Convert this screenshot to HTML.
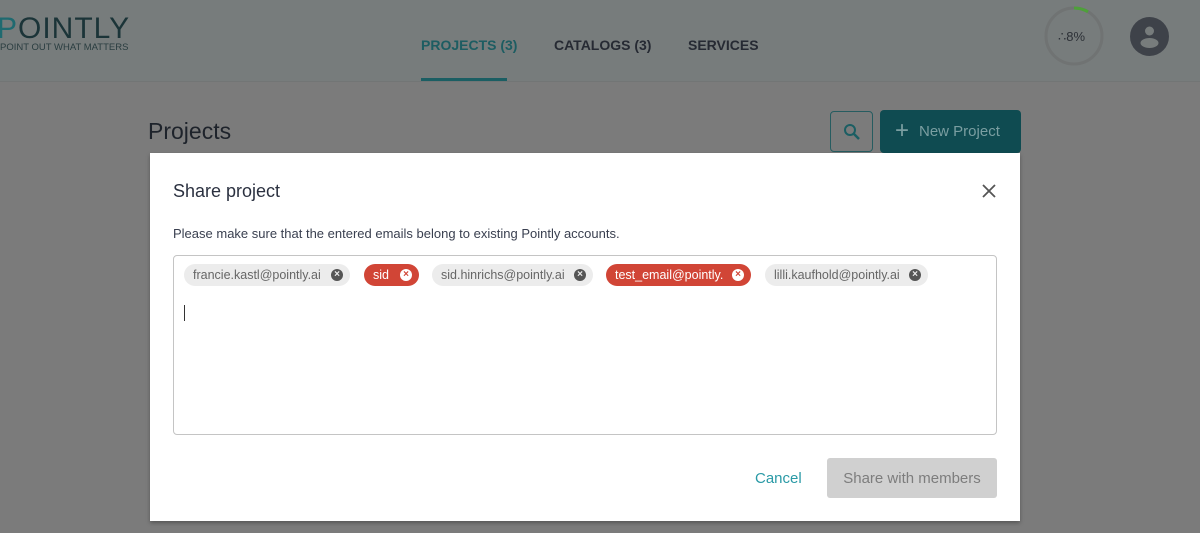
<!DOCTYPE html>
<html><head><style>
*{margin:0;padding:0;box-sizing:border-box}
body{width:1200px;height:533px;overflow:hidden;background:#7b7b7b;font-family:"Liberation Sans",sans-serif;position:relative}
.hdr{position:absolute;left:0;top:0;width:1200px;height:82px;background:#777c7c;border-bottom:1px solid #727575}
.abs{position:absolute}
.chip{position:absolute;top:264px;height:22px;border-radius:11px;background:#ececec;color:#666;font-size:12.5px;line-height:22px;padding-left:9px}
.chip.red{background:#d14536;color:#fff}
.x{position:absolute;right:7px;top:5px;width:12px;height:12px;border-radius:6px;background:#555;color:#ececec;font-size:10px;line-height:12px;text-align:center;font-weight:bold}
.red .x{background:#fff;color:#d14536}
</style></head><body>
<div class="hdr">
 <div class="abs" style="left:-3px;top:12px;font-size:30px;letter-spacing:1px;color:#1b3438"><span style="color:#1f6a70">P</span>OINTLY</div>
 <div class="abs" style="left:0;top:42px;font-size:9.5px;color:#2a3d40">POINT OUT WHAT MATTERS</div>
 <div class="abs" style="left:421px;top:37px;font-size:14px;font-weight:bold;color:#1d5d62">PROJECTS (3)</div>
 <div class="abs" style="left:421px;top:78px;width:86px;height:3px;background:#1b5e63"></div>
 <div class="abs" style="left:554px;top:37px;font-size:14px;font-weight:bold;color:#262a33">CATALOGS (3)</div>
 <div class="abs" style="left:688px;top:37px;font-size:14px;font-weight:bold;color:#262a33">SERVICES</div>
 <svg class="abs" style="left:1044px;top:6px" width="60" height="60"><circle cx="30" cy="30" r="28" fill="none" stroke="#707373" stroke-width="3"/><path d="M30 2 A28 28 0 0 1 44 5.8" fill="none" stroke="#4ea03a" stroke-width="3"/></svg>
 <div class="abs" style="left:1058px;top:29px;font-size:13px;color:#2d3137">∴8%</div>
 <svg class="abs" style="left:1130px;top:17px" width="39" height="39"><circle cx="19.5" cy="19.5" r="19.5" fill="#3e4249"/><circle cx="19.5" cy="14" r="4.5" fill="#777c7c"/><ellipse cx="19.5" cy="26" rx="9" ry="5" fill="#777c7c"/></svg>
</div>
<div class="abs" style="left:148px;top:118px;font-size:23px;color:#1e232b">Projects</div>
<div class="abs" style="left:830px;top:111px;width:43px;height:41px;border:1px solid #265c60;border-radius:4px"></div>
<svg class="abs" style="left:842px;top:122px" width="20" height="20"><circle cx="8" cy="8" r="5" fill="none" stroke="#1b5e63" stroke-width="2"/><path d="M12 12 L17 17" stroke="#1b5e63" stroke-width="2.5"/></svg>
<div class="abs" style="left:880px;top:110px;width:141px;height:43px;background:#0f4b51;border-radius:4px;color:#7a9ea1;font-size:15px;line-height:43px;padding-left:39px">New Project</div>
<div class="abs" style="left:895px;top:118px;font-size:24px;color:#7a9ea1;line-height:26px">+</div>
<div class="abs" style="left:150px;top:153px;width:870px;height:368px;background:#fff;box-shadow:0 2px 4px rgba(0,0,0,.3)">
 <div class="abs" style="left:23px;top:28px;font-size:18px;color:#2b3140">Share project</div>
 <svg class="abs" style="left:831px;top:30px" width="16" height="16"><path d="M2 2 L14 14 M14 2 L2 14" stroke="#555" stroke-width="1.8"/></svg>
 <div class="abs" style="left:23px;top:73px;font-size:13px;color:#3a4050">Please make sure that the entered emails belong to existing Pointly accounts.</div>
 <div class="abs" style="left:23px;top:102px;width:824px;height:180px;border:1px solid #c4c4c4;border-radius:4px"></div>
 <div class="abs" style="left:34px;top:152px;width:1px;height:16px;background:#333"></div>
 <div class="abs" style="left:605px;top:317px;font-size:15px;color:#2a9aa6">Cancel</div>
 <div class="abs" style="left:677px;top:305px;width:170px;height:40px;background:#d0d0d0;border-radius:3px;color:#7d7d7d;font-size:15px;line-height:42px;text-align:center">Share with members</div>
</div>
<div class="chip" style="left:184px;width:166px">francie.kastl@pointly.ai<span class="x">×</span></div>
<div class="chip red" style="left:364px;width:55px">sid<span class="x">×</span></div>
<div class="chip" style="left:432px;width:161px">sid.hinrichs@pointly.ai<span class="x">×</span></div>
<div class="chip red" style="left:606px;width:145px">test_email@pointly.<span class="x">×</span></div>
<div class="chip" style="left:765px;width:163px">lilli.kaufhold@pointly.ai<span class="x">×</span></div>
</body></html>
